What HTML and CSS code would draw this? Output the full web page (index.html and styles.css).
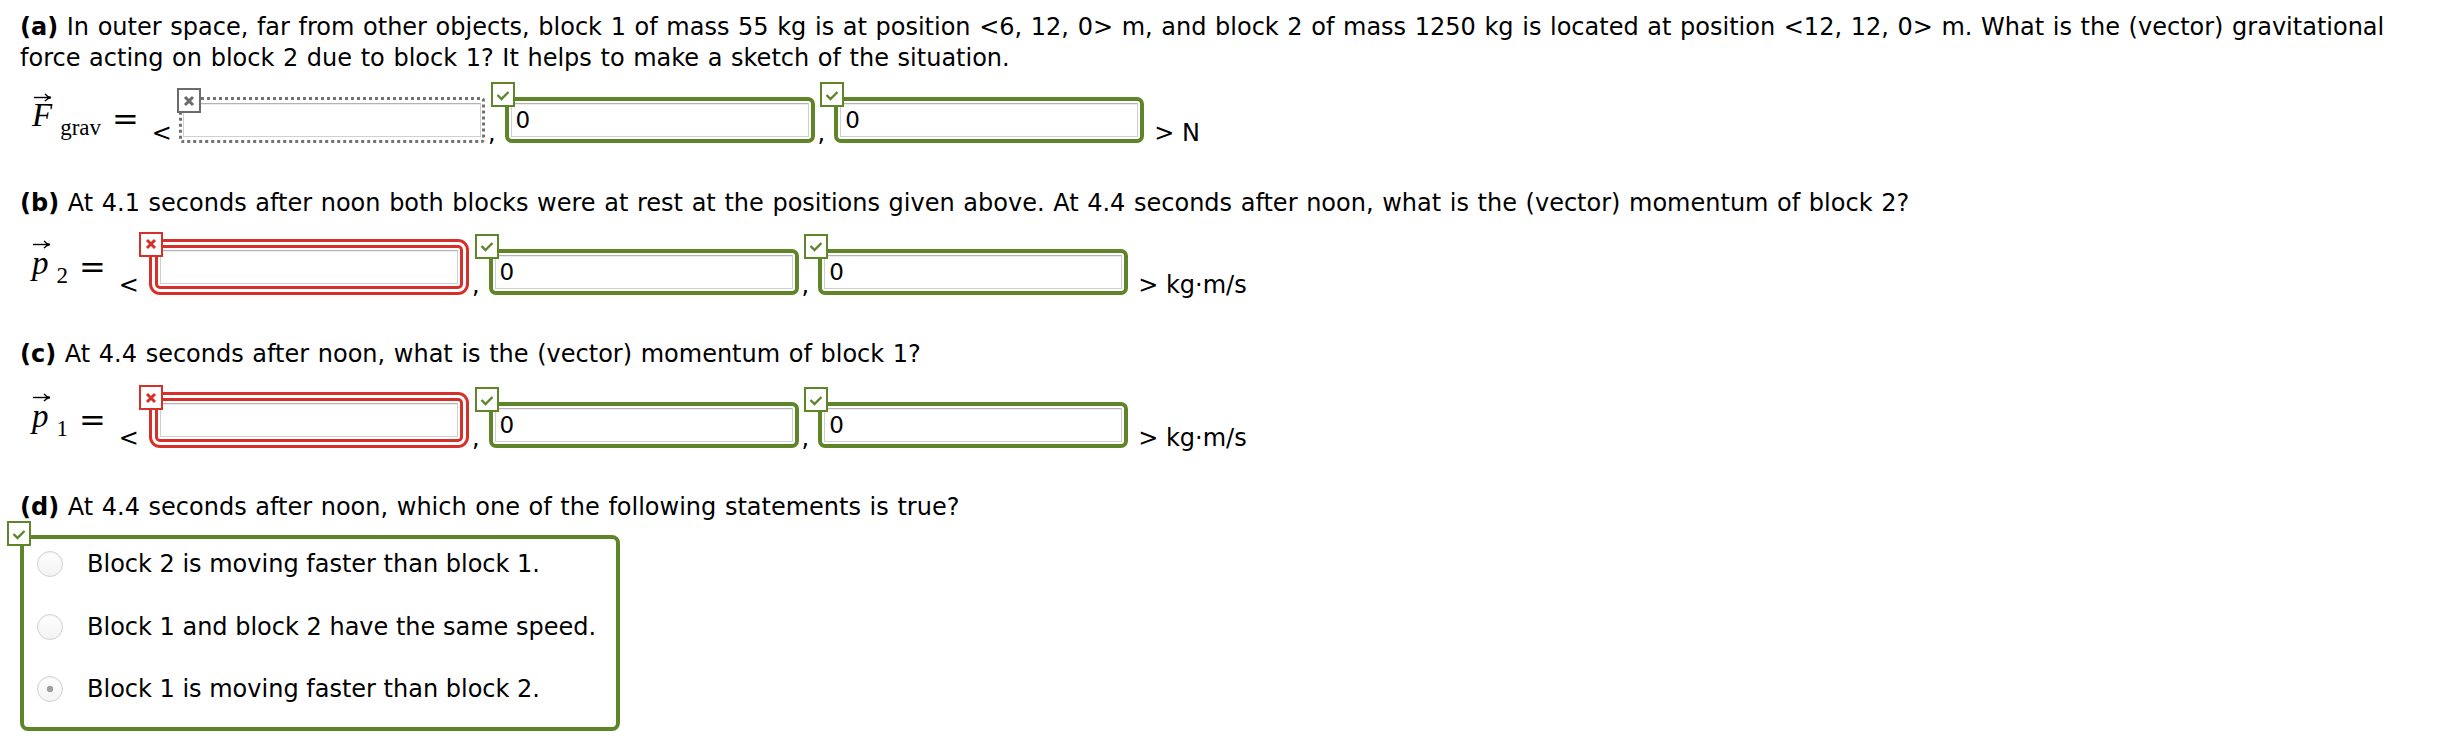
FILE: index.html
```html
<!DOCTYPE html>
<html lang="en">
<head>
<meta charset="utf-8">
<title>Gravitational force question</title>
<link rel="stylesheet" href="styles.css">
</head>
<body>
<div class="page">

  <section class="part">
    <p class="q"><b>(a)</b> In outer space, far from other objects, block 1 of mass 55 kg is at position &lt;6, 12, 0&gt; m, and block 2 of mass 1250 kg is located at position &lt;12, 12, 0&gt; m. What is the (vector) gravitational force acting on block 2 due to block 1? It helps to make a sketch of the situation.</p>
    <div class="answer answer--a">
      <span class="math">
        <span class="var">F<svg class="vec" viewBox="0 0 18 9"><path d="M0.5 4.5H17" /><path d="M11.5 0.8C12.8 2.7 14.6 3.9 17.4 4.5C14.6 5.1 12.8 6.3 11.5 8.2" /></svg></span><span class="sub">grav</span><span class="eq">=</span>
      </span>
      <span class="lt">&lt;</span>
      <span class="field field--blank">
        <span class="badge badge--gray"><svg viewBox="0 0 20 20"><path d="M6 6L14 14M14 6L6 14" /></svg></span>
        <input class="input" type="text" value="">
      </span>
      <span class="sep">,</span>
      <span class="field field--ok">
        <span class="badge badge--ok"><svg viewBox="0 0 20 20"><path d="M4.5 10L8.5 14L15.5 7" /></svg></span>
        <input class="input" type="text" value="0">
      </span>
      <span class="sep">,</span>
      <span class="field field--ok">
        <span class="badge badge--ok"><svg viewBox="0 0 20 20"><path d="M4.5 10L8.5 14L15.5 7" /></svg></span>
        <input class="input" type="text" value="0">
      </span>
      <span class="unit">&gt; N</span>
    </div>
  </section>

  <section class="part part--b">
    <p class="q"><b>(b)</b> At 4.1 seconds after noon both blocks were at rest at the positions given above. At 4.4 seconds after noon, what is the (vector) momentum of block 2?</p>
    <div class="answer answer--b">
      <span class="math math--p">
        <span class="var var--p">p<svg class="vec" viewBox="0 0 18 9"><path d="M0.5 4.5H17" /><path d="M11.5 0.8C12.8 2.7 14.6 3.9 17.4 4.5C14.6 5.1 12.8 6.3 11.5 8.2" /></svg></span><span class="sub">2</span><span class="eq">=</span>
      </span>
      <span class="lt lt--wide">&lt;</span>
      <span class="field field--bad">
        <span class="badge badge--bad"><svg viewBox="0 0 20 20"><path d="M6 6L14 14M14 6L6 14" /></svg></span>
        <input class="input" type="text" value="">
      </span>
      <span class="sep">,</span>
      <span class="field field--ok">
        <span class="badge badge--ok"><svg viewBox="0 0 20 20"><path d="M4.5 10L8.5 14L15.5 7" /></svg></span>
        <input class="input" type="text" value="0">
      </span>
      <span class="sep">,</span>
      <span class="field field--ok">
        <span class="badge badge--ok"><svg viewBox="0 0 20 20"><path d="M4.5 10L8.5 14L15.5 7" /></svg></span>
        <input class="input" type="text" value="0">
      </span>
      <span class="unit">&gt; kg·m/s</span>
    </div>
  </section>

  <section class="part part--c">
    <p class="q"><b>(c)</b> At 4.4 seconds after noon, what is the (vector) momentum of block 1?</p>
    <div class="answer answer--c">
      <span class="math math--p">
        <span class="var var--p">p<svg class="vec" viewBox="0 0 18 9"><path d="M0.5 4.5H17" /><path d="M11.5 0.8C12.8 2.7 14.6 3.9 17.4 4.5C14.6 5.1 12.8 6.3 11.5 8.2" /></svg></span><span class="sub">1</span><span class="eq">=</span>
      </span>
      <span class="lt lt--wide">&lt;</span>
      <span class="field field--bad">
        <span class="badge badge--bad"><svg viewBox="0 0 20 20"><path d="M6 6L14 14M14 6L6 14" /></svg></span>
        <input class="input" type="text" value="">
      </span>
      <span class="sep">,</span>
      <span class="field field--ok">
        <span class="badge badge--ok"><svg viewBox="0 0 20 20"><path d="M4.5 10L8.5 14L15.5 7" /></svg></span>
        <input class="input" type="text" value="0">
      </span>
      <span class="sep">,</span>
      <span class="field field--ok">
        <span class="badge badge--ok"><svg viewBox="0 0 20 20"><path d="M4.5 10L8.5 14L15.5 7" /></svg></span>
        <input class="input" type="text" value="0">
      </span>
      <span class="unit">&gt; kg·m/s</span>
    </div>
  </section>

  <section class="part part--d">
    <p class="q"><b>(d)</b> At 4.4 seconds after noon, which one of the following statements is true?</p>
    <div class="choices">
      <span class="badge badge--ok badge--choices"><svg viewBox="0 0 20 20"><path d="M4.5 10L8.5 14L15.5 7" /></svg></span>
      <label class="choice"><span class="radio"></span>Block 2 is moving faster than block 1.</label>
      <label class="choice"><span class="radio"></span>Block 1 and block 2 have the same speed.</label>
      <label class="choice"><span class="radio radio--on"></span>Block 1 is moving faster than block 2.</label>
    </div>
  </section>

</div>
</body>
</html>
```

FILE: styles.css
```css
body {
  margin: 0;
  background: #fff;
  color: #000;
  font-family: "DejaVu Sans", Verdana, sans-serif;
  font-size: 24px;
}

.page {
  padding: 11.5px 20px 0;
}

.q {
  margin: 0;
  line-height: 31px;
  word-spacing: 1px;
}

.part--b { margin-top: 44.5px; }
.part--c { margin-top: 44.5px; }
.part--d { margin-top: 44px; }

.answer {
  display: flex;
  align-items: flex-end;
}

.answer--a { margin-top: 23.5px; }
.answer--b { margin-top: 20px; }
.answer--c { margin-top: 22px; }

/* math label */
.math {
  display: flex;
  align-items: flex-end;
  margin-left: 12px;
  font-family: "Liberation Serif", "Times New Roman", serif;
}

.math--p { margin-bottom: 4px; }

.var {
  position: relative;
  font-style: italic;
  font-size: 33px;
  line-height: 33px;
  margin-bottom: 11px;
}

.vec {
  position: absolute;
  left: 1px;
  top: -6px;
  width: 19px;
  height: 9px;
  fill: none;
  stroke: #000;
  stroke-width: 1.4;
}

.var--p .vec {
  left: 0;
  top: -7px;
}

.sub {
  font-size: 23px;
  line-height: 23px;
  margin-left: 8px;
  margin-bottom: 4px;
}

.eq {
  font-family: "DejaVu Serif", serif;
  font-size: 32px;
  line-height: 32px;
  margin-left: 11px;
  margin-bottom: 8px;
}

.lt {
  line-height: 24px;
  margin: 0 7px -2px 13px;
}

.lt--wide { margin-right: 10px; }

.sep {
  line-height: 24px;
  margin: 0 9px -2px 3px;
}

.unit {
  line-height: 24px;
  margin: 0 0 -2px 10px;
}

/* answer fields */
.field {
  position: relative;
  display: block;
  flex: none;
}

.field--blank {
  border: 3px dotted #727272;
  border-radius: 4px;
  padding: 3px 1px;
}

.field--ok {
  border: 4px solid #5e8628;
  border-radius: 7px;
  padding: 2px;
}

.field--bad {
  border: 9px double #d5312a;
  border-radius: 11px;
  padding: 2px;
}

.input {
  display: block;
  box-sizing: border-box;
  width: 298px;
  height: 34px;
  margin: 0;
  padding: 0 4px;
  border: 1px solid #cfcfcf;
  border-top-color: #b3b3b3;
  border-radius: 0;
  box-shadow: inset 0 1px 0 #ececec;
  background: #fff;
  color: #000;
  font-family: "DejaVu Sans", Verdana, sans-serif;
  font-size: 23px;
  outline: none;
}

/* status badges */
.badge {
  position: absolute;
  box-sizing: border-box;
  width: 24px;
  height: 25px;
  border: 2px solid;
  background: #fff;
  display: flex;
  align-items: center;
  justify-content: center;
  z-index: 1;
}

.badge svg {
  width: 20px;
  height: 20px;
  fill: none;
  stroke-linecap: butt;
}

.badge--ok { border-color: #5e8628; }
.badge--ok svg { stroke: #5e8628; stroke-width: 2.4; }

.badge--gray { border-color: #6b6b6b; }
.badge--gray svg { stroke: #6b6b6b; stroke-width: 3; }

.badge--bad { border-color: #d5312a; }
.badge--bad svg { stroke: #d5312a; stroke-width: 3; }

.field--blank .badge { left: -5px; top: -12px; }
.field--ok .badge { left: -18px; top: -19px; }
.field--bad .badge { left: -19px; top: -16px; }

/* multiple choice */
.choices {
  position: relative;
  display: flex;
  flex-direction: column;
  gap: 12.5px;
  width: fit-content;
  margin-top: 12px;
  padding: 0 20px 13px 0;
  border: 4px solid #5e8628;
  border-radius: 8px;
}

.badge--choices { left: -17px; top: -18px; }

.choice {
  display: flex;
  align-items: center;
  height: 50px;
}

.radio {
  flex: none;
  box-sizing: border-box;
  width: 26px;
  height: 26px;
  margin: 0 24px 0 13px;
  border: 1px solid #d2d2d2;
  border-radius: 50%;
  background: linear-gradient(#ffffff, #f3f3f3);
  box-shadow: inset 0 1px 2px rgba(0, 0, 0, 0.06);
}

.radio--on {
  background: radial-gradient(circle, #a0a0a0 0 3px, transparent 3.6px), linear-gradient(#ffffff, #f3f3f3);
}
```
